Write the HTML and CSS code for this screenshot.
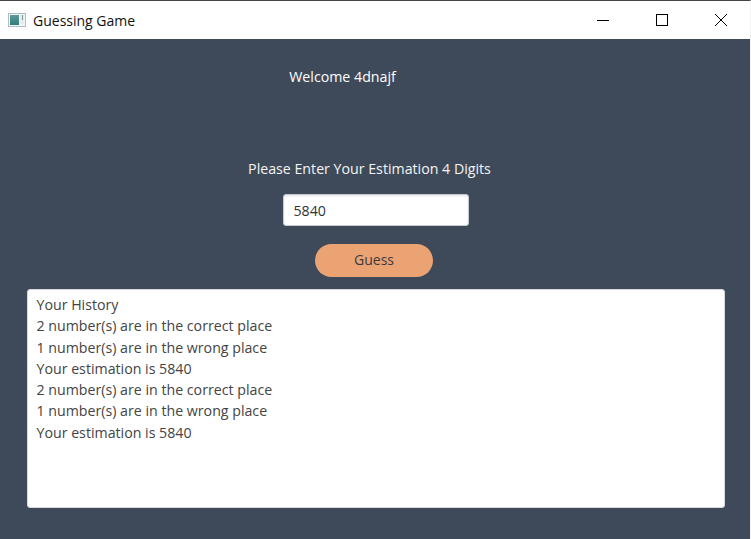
FILE: index.html
```html
<!DOCTYPE html>
<html lang="en">
<head>
    <meta charset="UTF-8">
    <meta name="viewport" content="width=device-width, initial-scale=1.0">
    <title>Guessing Game</title>
    <link rel="stylesheet" href="styles.css">
</head>
<body>
    <div class="window">
        <div class="titlebar">
            <svg class="app-icon" width="18" height="16" viewBox="0 0 18 16">
                <defs>
                    <linearGradient id="iconFill" x1="0" y1="0" x2="0" y2="1">
                        <stop offset="0" stop-color="#5d9c9a"/>
                        <stop offset="1" stop-color="#2f7d78"/>
                    </linearGradient>
                </defs>
                <rect x="0.5" y="1.5" width="17" height="13" fill="#f2f5f5" stroke="#b4bcbe"/>
                <rect x="2" y="3" width="9" height="10" fill="url(#iconFill)"/>
                <rect x="12" y="3" width="4" height="9" fill="#e6ecec"/>
                <rect x="14" y="3" width="1" height="5" fill="#7d9a9b"/>
            </svg>
            <span class="title">Guessing Game</span>
            <div class="window-buttons">
                <button class="win-btn">
                    <svg width="14" height="14" viewBox="0 0 14 14"><path d="M1 7.5H13" stroke="#000" fill="none"/></svg>
                </button>
                <button class="win-btn">
                    <svg width="14" height="14" viewBox="0 0 14 14"><rect x="1.5" y="1.5" width="11" height="11" stroke="#000" fill="none"/></svg>
                </button>
                <button class="win-btn">
                    <svg width="14" height="14" viewBox="0 0 14 14"><path d="M1 1L13 13M13 1L1 13" stroke="#000" fill="none"/></svg>
                </button>
            </div>
        </div>
        <div class="content">
            <div class="welcome">Welcome 4dnajf</div>
            <div class="prompt">Please Enter Your Estimation 4 Digits</div>
            <input class="guess-input" type="text" value="5840">
            <button class="guess-btn">Guess</button>
            <div class="history">
                <div>Your History</div>
                <div>2 number(s) are in the correct place</div>
                <div>1 number(s) are in the wrong place</div>
                <div>Your estimation is 5840</div>
                <div>2 number(s) are in the correct place</div>
                <div>1 number(s) are in the wrong place</div>
                <div>Your estimation is 5840</div>
            </div>
        </div>
    </div>
</body>
</html>
```
FILE: styles.css
```css
html, body {
    margin: 0;
    height: 100%;
}
body {
    font-family: "Open Sans", "Noto Sans", sans-serif;
    background: #fff;
    overflow: hidden;
}
.window {
    height: 539px;
    display: flex;
    flex-direction: column;
    border-top: 1px solid #444;
    border-right: 1px solid #f4f4f4;
    box-sizing: border-box;
}
.titlebar {
    height: 38px;
    display: flex;
    align-items: center;
    padding-left: 8px;
    background: #fff;
}
.app-icon {
    margin-right: 7px;
}
.title {
    font-size: 14px;
    color: #111;
}
.window-buttons {
    margin-left: auto;
    display: flex;
}
.win-btn {
    width: 59px;
    height: 38px;
    border: none;
    padding: 0;
    background: none;
    display: flex;
    align-items: center;
    justify-content: center;
}
.content {
    flex: 1;
    background: #3e4a59;
    display: flex;
    flex-direction: column;
    align-items: center;
}
.welcome {
    font-size: 14.2px;
    line-height: 20px;
    color: #fff;
    margin-top: 28px;
    margin-right: 65px;
}
.prompt {
    font-size: 14.2px;
    line-height: 20px;
    color: #f4f4f4;
    margin-top: 72px;
    margin-right: 11px;
}
.guess-input {
    width: 186px;
    height: 32px;
    box-sizing: border-box;
    margin-top: 15px;
    margin-left: 1px;
    padding: 0 10px;
    border: 1px solid #c8ccd4;
    border-radius: 3px;
    background: #fff;
    box-shadow: inset 0 1px 2px #e4e4ea;
    font-family: inherit;
    font-size: 14.2px;
    color: #333;
    outline: none;
}
.guess-btn {
    width: 118px;
    height: 33px;
    margin-top: 18px;
    margin-right: 2px;
    padding: 0 0 2px;
    border: none;
    border-radius: 17px;
    background: #eca373;
    font-family: inherit;
    font-size: 14px;
    color: #3b3b3b;
}
.history {
    width: 698px;
    height: 219px;
    box-sizing: border-box;
    margin-top: 12px;
    margin-left: 1px;
    padding: 4px 9px;
    background: #fff;
    border: 1px solid #d5d8dc;
    border-radius: 3px;
    font-size: 14.2px;
    line-height: 21.3px;
    color: #444;
}
```
